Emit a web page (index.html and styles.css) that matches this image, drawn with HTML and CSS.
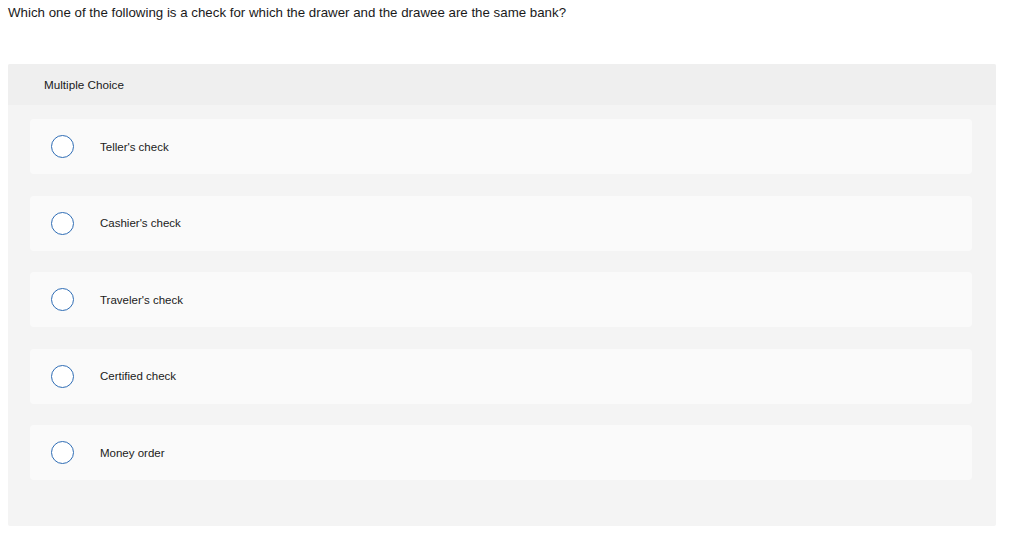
FILE: index.html
```html
<!DOCTYPE html>
<html>
<head>
<meta charset="utf-8">
<link rel="stylesheet" href="styles.css">
</head>
<body>
<p class="question">Which one of the following is a check for which the drawer and the drawee are the same bank?</p>
<div class="panel">
  <div class="panel-head">Multiple Choice</div>
  <div class="options">
    <label class="option"><span class="radio"></span><span class="opt-text">Teller's check</span></label>
    <label class="option"><span class="radio"></span><span class="opt-text">Cashier's check</span></label>
    <label class="option"><span class="radio"></span><span class="opt-text">Traveler's check</span></label>
    <label class="option"><span class="radio"></span><span class="opt-text">Certified check</span></label>
    <label class="option"><span class="radio"></span><span class="opt-text">Money order</span></label>
  </div>
</div>
</body>
</html>
```
FILE: styles.css
```css
html, body {
  margin: 0;
  padding: 0;
  background: #ffffff;
}
body {
  font-family: "Liberation Sans", Arial, sans-serif;
  color: #1a1a1a;
  padding: 0 28px 0 8px;
}
.question {
  margin: 0;
  padding-top: 5px;
  font-size: 13.3px;
  line-height: 16px;
  height: 59px;
}
.panel {
  background: #f4f4f4;
  border-radius: 2px;
  padding-bottom: 46px;
}
.panel-head {
  background: #efefef;
  height: 41px;
  display: flex;
  align-items: center;
  padding-left: 36px;
  font-size: 11.7px;
  border-radius: 2px 2px 0 0;
}
.options {
  display: flex;
  flex-direction: column;
  gap: 21.5px;
  padding: 14px 24px 0 22px;
}
.option {
  background: #fafafa;
  border-radius: 4px;
  height: 55px;
  display: flex;
  align-items: center;
  padding-left: 21px;
  font-size: 11.5px;
}
.radio {
  width: 21px;
  height: 21px;
  border: 1px solid #2f6db5;
  border-radius: 50%;
  background: #fff;
  flex: none;
}
.opt-text {
  margin-left: 26px;
}
```
